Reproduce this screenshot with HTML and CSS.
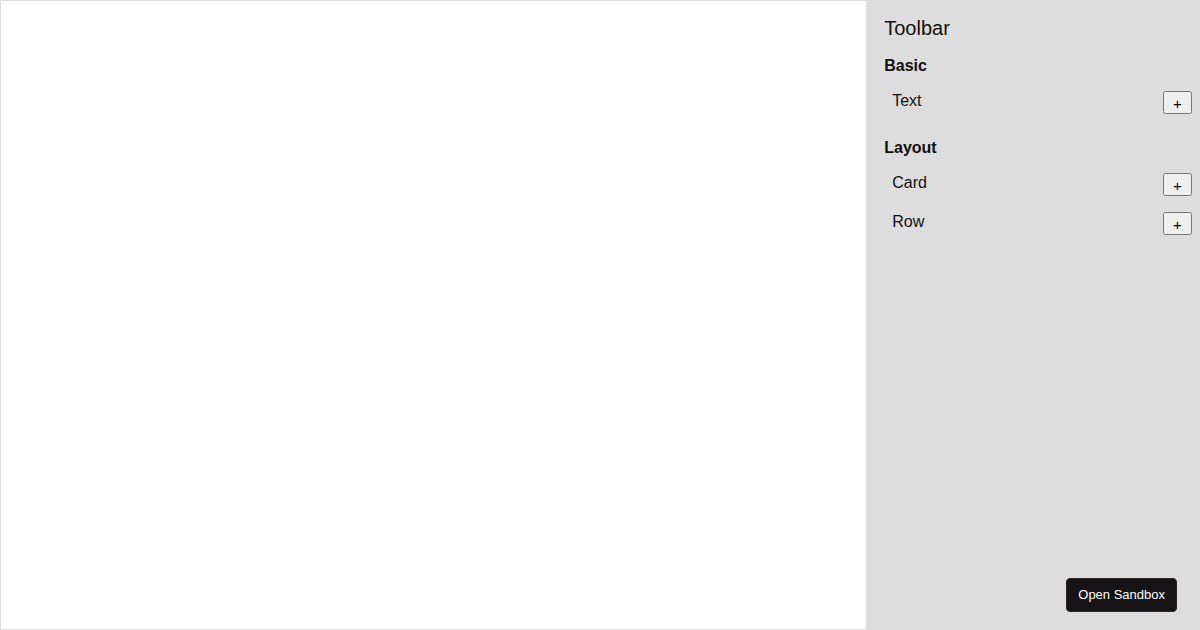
FILE: index.html
```html
<!DOCTYPE html>
<html lang="en">
<head>
    <meta charset="UTF-8">
    <meta name="viewport" content="width=device-width, initial-scale=1.0">
    <title>Page Builder</title>
    <link rel="stylesheet" href="styles.css">
</head>
<body>
    <div class="editor">
        <main class="canvas"></main>
        <aside class="toolbar">
            <h1>Toolbar</h1>
            <h2>Basic</h2>
            <ul>
                <li><span>Text</span><button type="button" aria-label="Add Text">+</button></li>
            </ul>
            <h2>Layout</h2>
            <ul>
                <li><span>Card</span><button type="button" aria-label="Add Card">+</button></li>
                <li><span>Row</span><button type="button" aria-label="Add Row">+</button></li>
            </ul>
        </aside>
    </div>
    <button type="button" class="sandbox-button">Open Sandbox</button>
</body>
</html>
```
FILE: styles.css
```css
* {
    box-sizing: border-box;
}

body {
    margin: 0;
    font-family: "Liberation Sans", Arial, sans-serif;
    font-size: 16px;
    line-height: 23px;
    color: #111;
}

.editor {
    display: grid;
    grid-template-columns: 13fr 5fr;
    min-height: 100vh;
    border: 1px solid #ddd;
}

.toolbar {
    padding: 16px 7px 16px 18px;
    background-color: #ddd;
}

h1 {
    margin: 0 0 14px;
    font-size: 20px;
    font-weight: normal;
}

h2 {
    margin: 0 0 14px;
    font-size: 16px;
}

ul {
    margin: 0 0 22px;
    padding: 0 0 0 8px;
    list-style: none;
}

li {
    display: flex;
    justify-content: space-between;
    align-items: flex-start;
    margin-bottom: 16px;
    line-height: 19px;
}

button {
    font-family: inherit;
}

li button {
    width: 29px;
    height: 23px;
    padding: 2px 6px 0;
    font-size: 15px;
}

.sandbox-button {
    position: fixed;
    right: 23px;
    bottom: 18px;
    padding: 0 11px;
    border: 1px solid #2c2424;
    border-radius: 4px;
    background-color: #151315;
    color: #fff;
    font-size: 13px;
    line-height: 32px;
}
```
